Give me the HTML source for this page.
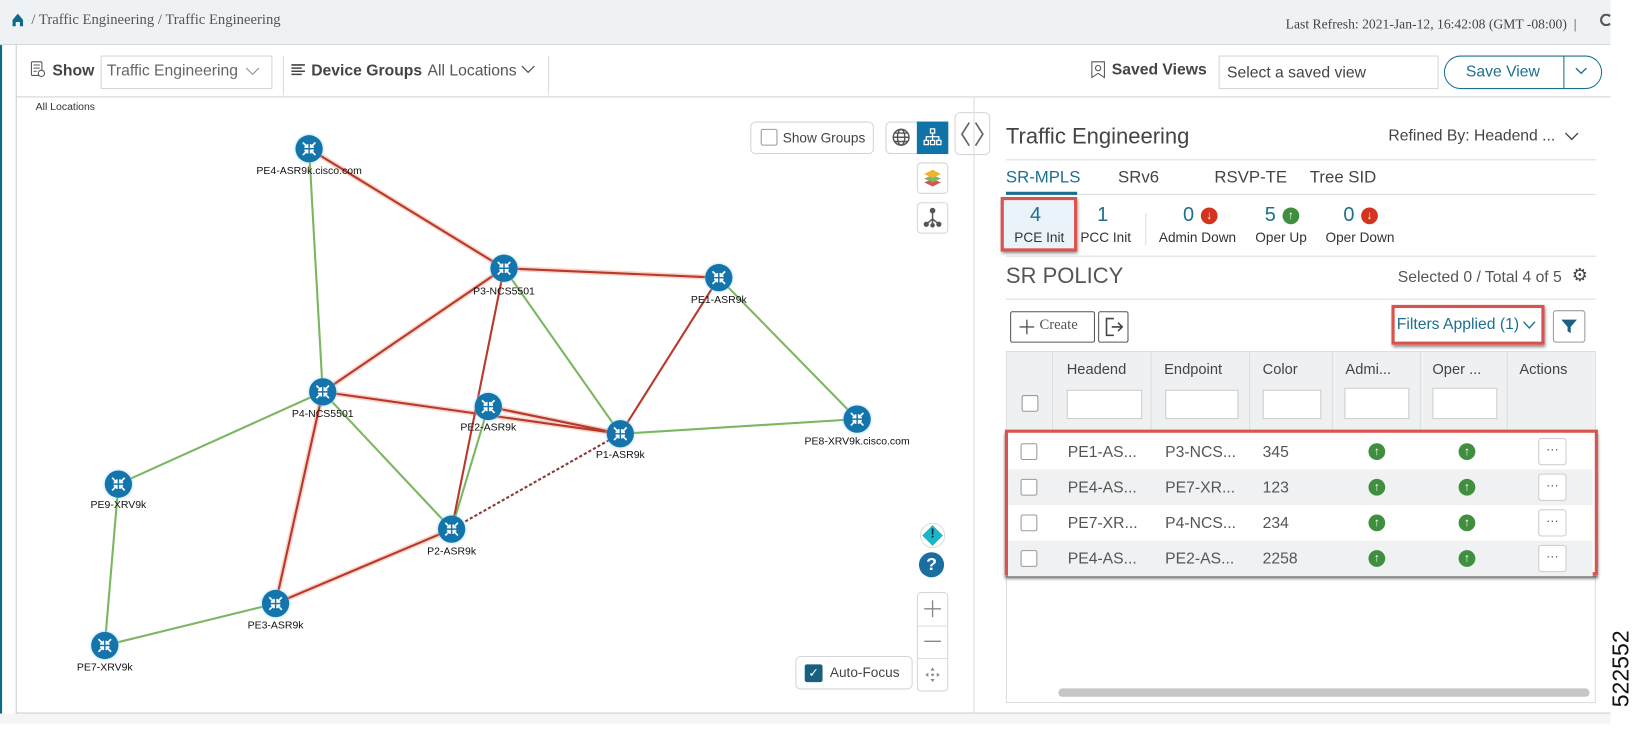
<!DOCTYPE html>
<html><head><style>
*{box-sizing:border-box;margin:0;padding:0}
body{width:1643px;height:717px;background:#fff;font-family:"Liberation Sans",sans-serif;position:relative;overflow:hidden;color:#333}
#w{position:absolute;left:0;top:0;width:1568px;height:684px;transform:scale(1.04783);transform-origin:0 0}
.a{position:absolute}
.top{left:0;top:0;width:1537px;height:43px;background:#eff2f4;border-bottom:1px solid #d6d9db}
.serif{font-family:"Liberation Serif",serif}
.bar{left:15px;top:43px;width:1522px;height:50px;background:#fff;border-bottom:1px solid #d0d3d5;border-left:1px solid #ccc}
.box{border:1px solid #d3d6d8;border-radius:3px;background:#fff}
.lbl{font-size:10px;color:#111;text-align:center;white-space:nowrap;transform:translateX(-50%)}
.node{width:26px;height:26px;border-radius:50%;background:#1475ad;transform:translate(-50%,-50%);box-shadow:0 0 3px #9cd3f0}
.node svg{position:absolute;left:5px;top:5px}
.ibtn{width:30px;height:30px;border:1px solid #d3d6d8;border-radius:4px;background:#fff}
.hd{font-size:14px;color:#444}
.row{left:962px;width:558px;height:34px}
.cb{width:16px;height:16px;border:1px solid #999;border-radius:2px;background:#fff}
.up{width:16px;height:16px;border-radius:50%;background:#3f8f3f;color:#fff;font-size:11px;text-align:center;line-height:16px;font-weight:bold}
.dots{width:27px;height:26px;border:1px solid #ccc;border-radius:3px;background:#fff;text-align:center;font-size:12px;line-height:20px;color:#555}
.cell{font-size:15px;color:#555;top:9px}
.st{font-size:13px;color:#333;top:219px;white-space:nowrap}
</style></head><body><div id="w">
<svg width="0" height="0" style="position:absolute"><defs><g id="ar" stroke="#fff" stroke-width="1.6" fill="none"><path d="M2 2 L6.5 6.5 M6.5 3.5 V6.5 H3.5"/><path d="M14 2 L9.5 6.5 M9.5 3.5 V6.5 H12.5" transform="translate(0,0)"/><path d="M2 14 L6.5 9.5 M3.5 9.5 H6.5 V12.5"/><path d="M14 14 L9.5 9.5 M12.5 9.5 H9.5 V12.5"/></g></defs></svg>
<div class="a" style="left:0;top:0;width:2px;height:684px;background:#0f6a88"></div>
<div class="a top"></div>
<div class="a" style="left:11px;top:12px;width:12px;height:14px">
<svg width="12" height="14"><path d="M1 7 L6 1 L11 7 V13 H8 V9 H4 V13 H1Z" fill="#0d6a8a"/></svg></div>
<div class="a serif" style="left:30px;top:12px;font-size:14px;color:#555">/ Traffic Engineering / Traffic Engineering</div>
<div class="a serif" style="left:1227px;top:15px;font-size:13px;color:#444">Last Refresh: 2021-Jan-12, 16:42:08 (GMT -08:00) &nbsp;|</div>
<div class="a" style="left:1527px;top:13px;width:12px;height:12px;border:2px solid #555;border-radius:50%;border-right-color:transparent"></div>

<div class="a bar"></div>
<svg class="a" style="left:29px;top:58px" width="14" height="16"><rect x="1" y="1" width="10" height="13" rx="1" stroke="#555" fill="none"/><path d="M3 4H9M3 7H9M3 10H6" stroke="#555"/><circle cx="10.5" cy="12" r="3" fill="#fff" stroke="#555"/></svg>
<div class="a" style="left:50px;top:59px;font-size:15px;font-weight:bold;color:#444">Show</div>
<div class="a box" style="left:96px;top:53px;width:164px;height:32px;border-radius:0"></div>
<div class="a" style="left:102px;top:59px;font-size:15px;color:#666">Traffic Engineering</div>
<svg class="a" style="left:234px;top:64px" width="14" height="9"><path d="M1 1 L7 7 L13 1" stroke="#999" fill="none" stroke-width="1.2"/></svg>
<div class="a" style="left:270px;top:53px;width:1px;height:38px;background:#ddd"></div>
<svg class="a" style="left:278px;top:61px" width="14" height="12"><path d="M0 1H13M0 4H10M0 7H13M0 10H10" stroke="#444" stroke-width="1.5"/></svg>
<div class="a" style="left:297px;top:59px;font-size:15px;font-weight:bold;color:#444">Device Groups</div>
<div class="a" style="left:408px;top:59px;font-size:15px;color:#555">All Locations</div>
<svg class="a" style="left:497px;top:62px" width="14" height="9"><path d="M1 1 L7 7 L13 1" stroke="#555" fill="none" stroke-width="1.2"/></svg>
<div class="a" style="left:523px;top:53px;width:1px;height:38px;background:#ddd"></div>
<svg class="a" style="left:1041px;top:58px" width="14" height="17"><path d="M1 1H13V16L7 12L1 16Z" stroke="#555" fill="none"/><circle cx="7" cy="7" r="2.5" stroke="#555" fill="none"/></svg>
<div class="a" style="left:1061px;top:58px;font-size:15px;font-weight:bold;color:#444">Saved Views</div>
<div class="a box" style="left:1163px;top:53px;width:210px;height:32px;border-radius:0"></div>
<div class="a" style="left:1171px;top:61px;font-size:15px;color:#444">Select a saved view</div>
<div class="a" style="left:1378px;top:53px;width:151px;height:32px;border:1px solid #1d6f8f;border-radius:16px"></div>
<div class="a" style="left:1492px;top:53px;width:1px;height:32px;background:#1d6f8f"></div>
<div class="a" style="left:1399px;top:60px;font-size:15px;color:#1d6f8f">Save View</div>
<svg class="a" style="left:1503px;top:64px" width="12" height="8"><path d="M1 1 L6 6 L11 1" stroke="#1d6f8f" fill="none" stroke-width="1.3"/></svg>

<!-- map -->
<div class="a" style="left:15px;top:93px;width:1px;height:590px;background:#ccc"></div>
<div class="a" style="left:34px;top:97px;font-size:10px;color:#333">All Locations</div>
<svg class="a" style="left:0;top:0" width="930" height="680">
<g stroke="#7bb661" stroke-width="2" fill="none">
<line x1="295" y1="142" x2="308" y2="374"/><line x1="481" y1="256" x2="592" y2="414"/><line x1="686" y1="265" x2="818" y2="400"/>
<line x1="308" y1="374" x2="113" y2="462"/><line x1="308" y1="374" x2="431" y2="505"/><line x1="113" y1="462" x2="100" y2="616"/>
<line x1="100" y1="616" x2="263" y2="576"/><line x1="466" y1="388" x2="431" y2="505"/><line x1="592" y1="414" x2="818" y2="400"/>
</g>
<g stroke="#f5c3b5" stroke-width="5" fill="none" opacity=".7">
<line x1="295" y1="142" x2="481" y2="256"/><line x1="481" y1="256" x2="686" y2="265"/><line x1="481" y1="256" x2="308" y2="374"/>
<line x1="308" y1="374" x2="592" y2="414"/><line x1="466" y1="388" x2="592" y2="414"/><line x1="308" y1="374" x2="263" y2="576"/><line x1="263" y1="576" x2="431" y2="505"/>
</g>
<g stroke="#b8382a" stroke-width="2" fill="none">
<line x1="295" y1="142" x2="481" y2="256"/><line x1="481" y1="256" x2="686" y2="265"/><line x1="481" y1="256" x2="308" y2="374"/>
<line x1="481" y1="256" x2="431" y2="505"/><line x1="308" y1="374" x2="592" y2="414"/><line x1="466" y1="388" x2="592" y2="414"/>
<line x1="686" y1="265" x2="592" y2="414"/><line x1="308" y1="374" x2="263" y2="576"/><line x1="263" y1="576" x2="431" y2="505"/>
<line x1="431" y1="505" x2="592" y2="414" stroke-dasharray="3 2" stroke="#8b3a30"/>
</g>
</svg>
<div class="a node" style="left:295px;top:142px"><svg width="16" height="16"><use href="#ar"/></svg></div><div class="a lbl" style="left:295px;top:158px">PE4-ASR9k.cisco.com</div>
<div class="a node" style="left:481px;top:256px"><svg width="16" height="16"><use href="#ar"/></svg></div><div class="a lbl" style="left:481px;top:273px">P3-NCS5501</div>
<div class="a node" style="left:686px;top:265px"><svg width="16" height="16"><use href="#ar"/></svg></div><div class="a lbl" style="left:686px;top:281px">PE1-ASR9k</div>
<div class="a node" style="left:308px;top:374px"><svg width="16" height="16"><use href="#ar"/></svg></div><div class="a lbl" style="left:308px;top:390px">P4-NCS5501</div>
<div class="a node" style="left:466px;top:388px"><svg width="16" height="16"><use href="#ar"/></svg></div><div class="a lbl" style="left:466px;top:403px">PE2-ASR9k</div>
<div class="a node" style="left:592px;top:414px"><svg width="16" height="16"><use href="#ar"/></svg></div><div class="a lbl" style="left:592px;top:429px">P1-ASR9k</div>
<div class="a node" style="left:818px;top:400px"><svg width="16" height="16"><use href="#ar"/></svg></div><div class="a lbl" style="left:818px;top:416px">PE8-XRV9k.cisco.com</div>
<div class="a node" style="left:113px;top:462px"><svg width="16" height="16"><use href="#ar"/></svg></div><div class="a lbl" style="left:113px;top:477px">PE9-XRV9k</div>
<div class="a node" style="left:431px;top:505px"><svg width="16" height="16"><use href="#ar"/></svg></div><div class="a lbl" style="left:431px;top:521px">P2-ASR9k</div>
<div class="a node" style="left:263px;top:576px"><svg width="16" height="16"><use href="#ar"/></svg></div><div class="a lbl" style="left:263px;top:592px">PE3-ASR9k</div>
<div class="a node" style="left:100px;top:616px"><svg width="16" height="16"><use href="#ar"/></svg></div><div class="a lbl" style="left:100px;top:632px">PE7-XRV9k</div>

<div class="a box" style="left:716px;top:116px;width:118px;height:31px;border-radius:5px"></div>
<div class="a cb" style="left:726px;top:123px"></div>
<div class="a" style="left:747px;top:124px;font-size:13px;color:#444">Show Groups</div>
<div class="a box" style="left:845px;top:116px;width:60px;height:31px;border-radius:5px"></div>
<svg class="a" style="left:851px;top:122px" width="18" height="18"><g stroke="#555" fill="none" stroke-width="1.4"><circle cx="9" cy="9" r="7.5"/><ellipse cx="9" cy="9" rx="3.5" ry="7.5"/><path d="M1.5 9H16.5M3 5H15M3 13H15"/></g></svg>
<div class="a" style="left:875px;top:116px;width:30px;height:31px;background:#0f73a8"></div>
<svg class="a" style="left:881px;top:122px" width="18" height="18"><g stroke="#fff" fill="none" stroke-width="1.2"><rect x="7" y="1" width="4" height="4"/><rect x="1" y="12" width="4" height="4"/><rect x="7" y="12" width="4" height="4"/><rect x="13" y="12" width="4" height="4"/><path d="M9 5V12M3 12V8.5H15V12"/></g></svg>
<div class="a ibtn" style="left:875px;top:155px"></div>
<svg class="a" style="left:881px;top:160px" width="18" height="20"><path d="M9 11 L17 14 L9 18 L1 14Z" fill="#d9534f"/><path d="M9 7 L17 10.5 L9 14 L1 10.5Z" fill="#7bb661"/><path d="M9 2 L17 6 L9 10 L1 6Z" fill="#f0b429"/></svg>
<div class="a ibtn" style="left:875px;top:193px"></div>
<svg class="a" style="left:881px;top:198px" width="18" height="20"><g stroke="#555" stroke-width="1.4" fill="#555"><circle cx="9" cy="3" r="2"/><path d="M9 5V11L3 16M9 11L15 16M9 11V17" fill="none"/><circle cx="3" cy="16" r="1.8"/><circle cx="15" cy="16" r="1.8"/><circle cx="9" cy="17" r="1.5"/></g></svg>
<div class="a" style="left:911px;top:107px;width:34px;height:41px;border:1px solid #d3d6d8;border-radius:5px;background:#fff"></div>
<svg class="a" style="left:915px;top:114px" width="26" height="28"><path d="M10 3 L3 14 L10 25 M16 3 L23 14 L16 25" stroke="#666" stroke-width="1.6" fill="none"/></svg>
<div class="a" style="left:878px;top:499px;width:24px;height:24px;border-radius:50%;background:#fff;border:1px solid #ddd"></div>
<div class="a" style="left:883px;top:504px;width:14px;height:14px;background:#17b7c8;transform:rotate(45deg)"></div>
<div class="a" style="left:888px;top:502px;font-size:12px;font-weight:bold;color:#123">!</div>
<div class="a" style="left:877px;top:527px;width:24px;height:24px;border-radius:50%;background:#1a6ea0;color:#fff;font-weight:bold;font-size:17px;text-align:center;line-height:24px">?</div>
<div class="a box" style="left:875px;top:565px;width:30px;height:95px;border-radius:4px"></div>
<div class="a" style="left:875px;top:597px;width:30px;height:1px;background:#ddd"></div>
<div class="a" style="left:875px;top:628px;width:30px;height:1px;background:#ddd"></div>
<svg class="a" style="left:881px;top:572px" width="18" height="18"><path d="M9 1V17M1 9H17" stroke="#888" stroke-width="1.3"/></svg>
<svg class="a" style="left:881px;top:603px" width="18" height="18"><path d="M1 9H17" stroke="#888" stroke-width="1.3"/></svg>
<svg class="a" style="left:882px;top:636px" width="16" height="16"><g fill="#888"><path d="M8 1L6 4H10Z M8 15L6 12H10Z M1 8L4 6V10Z M15 8L12 6V10Z"/><circle cx="8" cy="8" r="1.3"/></g></svg>
<div class="a box" style="left:759px;top:626px;width:112px;height:32px;border-radius:5px"></div>
<div class="a" style="left:768px;top:634px;width:17px;height:17px;background:#1b5f7e;border-radius:2px;color:#fff;font-size:12px;text-align:center;line-height:17px">&#10003;</div>
<div class="a" style="left:792px;top:634px;font-size:13px;color:#444">Auto-Focus</div>
<div class="a" style="left:15px;top:680px;width:1522px;height:1px;background:#ccc"></div>
<div class="a" style="left:0;top:681px;width:1537px;height:10px;background:#f3f5f6"></div>

<!-- right panel -->
<div class="a" style="left:929px;top:93px;width:1px;height:588px;background:#ddd"></div>
<div class="a" style="left:960px;top:119px;font-size:21px;color:#444">Traffic Engineering</div>
<div class="a" style="left:1325px;top:121px;font-size:15px;color:#444">Refined By: Headend ...</div>
<svg class="a" style="left:1493px;top:126px" width="14" height="9"><path d="M1 1 L7 7 L13 1" stroke="#444" fill="none" stroke-width="1.3"/></svg>
<div class="a" style="left:960px;top:152px;width:563px;height:1px;background:#ddd"></div>
<div class="a" style="left:960px;top:161px;font-size:16px;color:#1d6f8f">SR-MPLS</div>
<div class="a" style="left:1067px;top:161px;font-size:16px;color:#444">SRv6</div>
<div class="a" style="left:1159px;top:161px;font-size:16px;color:#444">RSVP-TE</div>
<div class="a" style="left:1250px;top:161px;font-size:16px;color:#444">Tree SID</div>
<div class="a" style="left:960px;top:185px;width:563px;height:1px;background:#ddd"></div>
<div class="a" style="left:960px;top:183px;width:68px;height:3px;background:#1d6f8f"></div>
<div class="a" style="left:955px;top:188px;width:73px;height:52px;border:3px solid #d9534f;background:#e9f3f9;box-shadow:1px 2px 3px #888"></div>
<div class="a" style="left:983px;top:195px;font-size:19px;color:#1d6f8f">4</div>
<div class="a st" style="left:968px">PCE Init</div>
<div class="a" style="left:1047px;top:195px;font-size:19px;color:#1d6f8f">1</div>
<div class="a st" style="left:1031px">PCC Init</div>
<div class="a" style="left:1093px;top:204px;width:1px;height:30px;background:#ddd"></div>
<div class="a" style="left:1129px;top:195px;font-size:19px;color:#1d6f8f">0</div><div class="a up" style="left:1146px;top:198px;background:#d3331f">&#8595;</div>
<div class="a st" style="left:1106px">Admin Down</div>
<div class="a" style="left:1207px;top:195px;font-size:19px;color:#1d6f8f">5</div><div class="a up" style="left:1224px;top:198px">&#8593;</div>
<div class="a st" style="left:1198px">Oper Up</div>
<div class="a" style="left:1282px;top:195px;font-size:19px;color:#1d6f8f">0</div><div class="a up" style="left:1299px;top:198px;background:#d3331f">&#8595;</div>
<div class="a st" style="left:1265px">Oper Down</div>
<div class="a" style="left:960px;top:244px;width:563px;height:1px;background:#ddd"></div>
<div class="a" style="left:960px;top:252px;font-size:21px;color:#555">SR POLICY</div>
<div class="a" style="left:1334px;top:256px;font-size:15px;color:#555">Selected 0 / Total 4 of 5</div>
<div class="a" style="left:1500px;top:253px;font-size:17px;color:#444">&#9881;</div>
<div class="a" style="left:960px;top:285px;width:563px;height:1px;background:#ddd"></div>
<div class="a" style="left:964px;top:297px;width:81px;height:30px;border:1px solid #555;border-radius:2px"></div>
<svg class="a" style="left:972px;top:304px" width="16" height="16"><path d="M8 1V15M1 8H15" stroke="#555" stroke-width="1.3"/></svg>
<div class="a serif" style="left:992px;top:303px;font-size:14px;color:#555">Create</div>
<div class="a" style="left:1048px;top:297px;width:29px;height:30px;border:1px solid #555;border-radius:2px"></div>
<svg class="a" style="left:1053px;top:302px" width="20" height="20"><path d="M10 2H3V18H10M8 10H18M14 6L18 10L14 14" stroke="#444" stroke-width="1.5" fill="none"/></svg>
<div class="a" style="left:1328px;top:291px;width:146px;height:38px;border:3px solid #d9534f;background:#fff;box-shadow:1px 2px 3px #888"></div>
<div class="a" style="left:1333px;top:301px;font-size:15px;color:#1d6f8f">Filters Applied (1)</div>
<svg class="a" style="left:1453px;top:306px" width="13" height="8"><path d="M1 1 L6.5 7 L12 1" stroke="#1d6f8f" fill="none" stroke-width="1.3"/></svg>
<div class="a" style="left:1482px;top:296px;width:31px;height:31px;border:1px solid #999;border-radius:3px"></div>
<svg class="a" style="left:1490px;top:304px" width="15" height="15"><path d="M0 1 H15 L9 8 V14 L6 12 V8Z" fill="#1d5f82"/></svg>

<div class="a" style="left:960px;top:335px;width:563px;height:336px;border:1px solid #ddd"></div>
<div class="a" style="left:961px;top:336px;width:561px;height:74px;background:#eef0f1"></div>
<div class="a" style="left:1004px;top:336px;width:1px;height:74px;background:#ddd"></div>
<div class="a" style="left:1098px;top:336px;width:1px;height:74px;background:#ddd"></div>
<div class="a" style="left:1192px;top:336px;width:1px;height:74px;background:#ddd"></div>
<div class="a" style="left:1271px;top:336px;width:1px;height:74px;background:#ddd"></div>
<div class="a" style="left:1355px;top:336px;width:1px;height:74px;background:#ddd"></div>
<div class="a" style="left:1438px;top:336px;width:1px;height:74px;background:#ddd"></div>
<div class="a hd" style="left:1018px;top:344px">Headend</div>
<div class="a hd" style="left:1111px;top:344px">Endpoint</div>
<div class="a hd" style="left:1205px;top:344px">Color</div>
<div class="a hd" style="left:1284px;top:344px">Admi...</div>
<div class="a hd" style="left:1367px;top:344px">Oper ...</div>
<div class="a hd" style="left:1450px;top:344px">Actions</div>
<div class="a cb" style="left:975px;top:377px"></div>
<div class="a" style="left:1018px;top:372px;width:72px;height:28px;background:#fff;border:1px solid #ccc"></div>
<div class="a" style="left:1112px;top:372px;width:70px;height:28px;background:#fff;border:1px solid #ccc"></div>
<div class="a" style="left:1205px;top:372px;width:56px;height:28px;background:#fff;border:1px solid #ccc"></div>
<div class="a" style="left:1283px;top:370px;width:62px;height:30px;background:#fff;border:1px solid #ccc"></div>
<div class="a" style="left:1367px;top:370px;width:62px;height:30px;background:#fff;border:1px solid #ccc"></div>

<div class="a" style="left:959px;top:410px;width:566px;height:139px;border:3px solid #d9534f;box-shadow:0 3px 3px #555"></div>
<div class="a row" style="top:414px;background:#fff"><div class="a cb" style="left:12px;top:9px"></div><div class="a cell" style="left:57px">PE1-AS...</div><div class="a cell" style="left:150px">P3-NCS...</div><div class="a cell" style="left:243px">345</div><div class="a up" style="left:344px;top:9px">&#8593;</div><div class="a up" style="left:430px;top:9px">&#8593;</div><div class="a dots" style="left:506px;top:4px">&middot;&middot;&middot;</div></div>
<div class="a row" style="top:448px;background:#f0f1f2"><div class="a cb" style="left:12px;top:9px"></div><div class="a cell" style="left:57px">PE4-AS...</div><div class="a cell" style="left:150px">PE7-XR...</div><div class="a cell" style="left:243px">123</div><div class="a up" style="left:344px;top:9px">&#8593;</div><div class="a up" style="left:430px;top:9px">&#8593;</div><div class="a dots" style="left:506px;top:4px">&middot;&middot;&middot;</div></div>
<div class="a row" style="top:482px;background:#fff"><div class="a cb" style="left:12px;top:9px"></div><div class="a cell" style="left:57px">PE7-XR...</div><div class="a cell" style="left:150px">P4-NCS...</div><div class="a cell" style="left:243px">234</div><div class="a up" style="left:344px;top:9px">&#8593;</div><div class="a up" style="left:430px;top:9px">&#8593;</div><div class="a dots" style="left:506px;top:4px">&middot;&middot;&middot;</div></div>
<div class="a row" style="top:516px;background:#f0f1f2"><div class="a cb" style="left:12px;top:9px"></div><div class="a cell" style="left:57px">PE4-AS...</div><div class="a cell" style="left:150px">PE2-AS...</div><div class="a cell" style="left:243px">2258</div><div class="a up" style="left:344px;top:9px">&#8593;</div><div class="a up" style="left:430px;top:9px">&#8593;</div><div class="a dots" style="left:506px;top:4px">&middot;&middot;&middot;</div></div>
<div class="a" style="left:1010px;top:657px;width:507px;height:8px;border-radius:4px;background:#c4c6c8"></div>
<div class="a" style="left:1537px;top:0;width:40px;height:700px;background:#fff"></div>
<div class="a" style="left:1512px;top:627px;width:70px;font-size:22px;color:#111;transform:rotate(-90deg);transform-origin:center;text-align:center">522552</div>
</div></body></html>
